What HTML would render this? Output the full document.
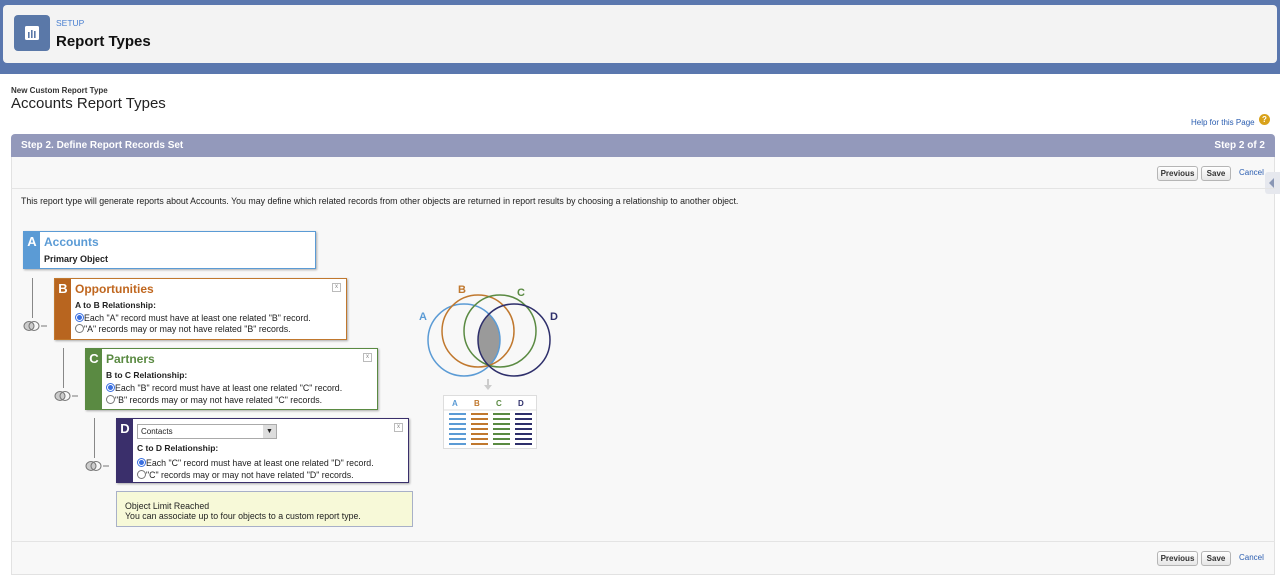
<!DOCTYPE html>
<html><head><meta charset="utf-8"><style>
*{margin:0;padding:0;box-sizing:border-box}
body{width:1280px;height:575px;overflow:hidden;background:#5a77ae;font-family:"Liberation Sans",Arial,sans-serif;position:relative;color:#222}
.a{position:absolute}
.hdr{left:3px;top:5px;width:1274px;height:58px;background:#f3f3f3;border-radius:4px}
.icon{left:14px;top:15px;width:36px;height:36px;background:#5a78a8;border-radius:4px}
.main{left:0;top:74px;width:1280px;height:501px;background:#fff}
.panel{left:11px;top:157px;width:1264px;height:418px;background:#f8f8f8;border:1px solid #e2e2e2;border-top:none}
.step{left:11px;top:134px;width:1264px;height:23px;background:#9399bb;border-radius:4px 4px 0 0;color:#fff;font-weight:bold;font-size:10px;line-height:23px;padding:0 10px}
.btn{height:15px;border:1px solid #b5b5b5;border-radius:3px;background:linear-gradient(#fff,#e6e6e6);font-size:8px;font-weight:bold;color:#333;text-align:center;line-height:13px}
.lnk{color:#2a5db0;font-size:8px}
.box{background:#fff;border:1px solid;box-shadow:1px 1px 2px #aaa}
.let{position:absolute;left:0;top:0;bottom:0;width:16px;color:#fff;font-weight:bold;font-size:13px;text-align:center;line-height:20px}
.ttl{position:absolute;left:20px;top:3px;font-size:12px;font-weight:bold}
.sub{position:absolute;left:20px;font-size:8.5px;font-weight:bold;color:#222}
.opt{position:absolute;left:7px;font-size:8.8px;color:#222;white-space:nowrap}
.rad{display:inline-block;width:9px;height:9px;border-radius:50%;border:1px solid #777;vertical-align:-1px;background:#fff}
.rad.on{border-color:#3a6fe0;background:radial-gradient(#3a6fe0 45%,#fff 55%)}
.x{position:absolute;right:5px;top:4px;width:9px;height:9px;border:1px solid #bbb;font-size:6px;color:#888;text-align:center;line-height:7px}
.vl{background:#888;width:1px}
</style></head><body>
<div class="a hdr"></div>
<div class="a icon"><svg width="36" height="36"><rect x="11" y="11" width="14" height="14" rx="1.5" fill="#fff"/><rect x="14" y="17" width="1.6" height="6" fill="#5a78a8"/><rect x="17" y="15" width="1.6" height="8" fill="#5a78a8"/><rect x="20" y="16" width="1.6" height="7" fill="#5a78a8"/></svg></div>
<div class="a" style="left:56px;top:18px;font-size:8.5px;color:#4a80d1">SETUP</div>
<div class="a" style="left:56px;top:33px;font-size:15px;font-weight:bold;color:#111">Report Types</div>
<div class="a main"></div>
<div class="a" style="left:11px;top:86px;font-size:8px;font-weight:bold;color:#333">New Custom Report Type</div>
<div class="a" style="left:11px;top:95px;font-size:15px;color:#222">Accounts Report Types</div>
<div class="a lnk" style="left:1191px;top:118px">Help for this Page</div>
<div class="a" style="left:1259px;top:114px;width:11px;height:11px;border-radius:50%;background:#d9a21b;color:#fff;font-size:8px;font-weight:bold;text-align:center;line-height:11px">?</div>
<div class="a step">Step 2. Define Report Records Set<span style="float:right">Step 2 of 2</span></div>
<div class="a panel"></div>
<div class="a btn" style="left:1157px;top:166px;width:41px">Previous</div>
<div class="a btn" style="left:1201px;top:166px;width:30px">Save</div>
<div class="a lnk" style="left:1239px;top:168px">Cancel</div>
<div class="a" style="left:1265px;top:172px;width:15px;height:22px;background:#e6e8ee;border-radius:3px 0 0 3px"><div style="margin:6px 0 0 4px;width:0;height:0;border-top:5px solid transparent;border-bottom:5px solid transparent;border-right:5px solid #8a97b5"></div></div>
<div class="a" style="left:11px;top:188px;width:1264px;height:1px;background:#e4e4e4"></div>
<div class="a" style="left:21px;top:196px;font-size:8.8px;color:#222;white-space:nowrap">This report type will generate reports about Accounts. You may define which related records from other objects are returned in report results by choosing a relationship to another object.</div>

<div class="a box" style="left:23px;top:231px;width:293px;height:38px;border-color:#5b9bd5"><div class="let" style="background:#5b9bd5">A</div><div class="ttl" style="color:#5b9bd5">Accounts</div><div class="sub" style="top:22px;font-size:9px">Primary Object</div></div>

<div class="a vl" style="left:32px;top:278px;height:40px"></div>
<div class="a" style="left:23px;top:319px"><svg width="24" height="12"><ellipse cx="6" cy="6" rx="5" ry="4.5" fill="#ccc" stroke="#777"/><ellipse cx="11" cy="6" rx="5" ry="4.5" fill="none" stroke="#777"/><line x1="18" y1="6" x2="24" y2="6" stroke="#777"/></svg></div>
<div class="a box" style="left:54px;top:278px;width:293px;height:62px;border-color:#c0782e"><div class="let" style="background:#b8651f">B</div><div class="ttl" style="color:#c0671f">Opportunities</div><div class="x">x</div><div class="sub" style="top:21px">A to B Relationship:</div><div class="opt" style="left:20px;top:34px"><span class="rad on"></span>Each "A" record must have at least one related "B" record.</div><div class="opt" style="left:20px;top:45px"><span class="rad"></span>"A" records may or may not have related "B" records.</div></div>

<div class="a vl" style="left:63px;top:348px;height:40px"></div>
<div class="a" style="left:54px;top:389px"><svg width="24" height="12"><ellipse cx="6" cy="6" rx="5" ry="4.5" fill="#ccc" stroke="#777"/><ellipse cx="11" cy="6" rx="5" ry="4.5" fill="none" stroke="#777"/><line x1="18" y1="6" x2="24" y2="6" stroke="#777"/></svg></div>
<div class="a box" style="left:85px;top:348px;width:293px;height:62px;border-color:#5a8a42"><div class="let" style="background:#5a8a42">C</div><div class="ttl" style="color:#5a8a42">Partners</div><div class="x">x</div><div class="sub" style="top:21px">B to C Relationship:</div><div class="opt" style="left:20px;top:34px"><span class="rad on"></span>Each "B" record must have at least one related "C" record.</div><div class="opt" style="left:20px;top:46px"><span class="rad"></span>"B" records may or may not have related "C" records.</div></div>

<div class="a vl" style="left:94px;top:418px;height:40px"></div>
<div class="a" style="left:85px;top:459px"><svg width="24" height="12"><ellipse cx="6" cy="6" rx="5" ry="4.5" fill="#ccc" stroke="#777"/><ellipse cx="11" cy="6" rx="5" ry="4.5" fill="none" stroke="#777"/><line x1="18" y1="6" x2="24" y2="6" stroke="#777"/></svg></div>
<div class="a box" style="left:116px;top:418px;width:293px;height:65px;border-color:#3a2f6b"><div class="let" style="background:#3a2f6b">D</div><div class="a" style="left:20px;top:5px;width:140px;height:15px;border:1px solid #aaa;font-size:8px;line-height:13px;padding-left:3px;background:#fff">Contacts<span style="position:absolute;right:0;top:0;width:13px;height:13px;background:#ddd;text-align:center;font-size:7px">&#9660;</span></div><div class="x">x</div><div class="sub" style="top:24px">C to D Relationship:</div><div class="opt" style="left:20px;top:39px"><span class="rad on"></span>Each "C" record must have at least one related "D" record.</div><div class="opt" style="left:20px;top:51px"><span class="rad"></span>"C" records may or may not have related "D" records.</div></div>

<div class="a" style="left:116px;top:491px;width:297px;height:36px;background:#f7f9d8;border:1px solid #a8b0c8;font-size:8.8px;color:#222;padding:9px 0 0 8px;line-height:10px">Object Limit Reached<br>You can associate up to four objects to a custom report type.</div>

<svg class="a" style="left:410px;top:280px" width="160" height="175">
<defs><clipPath id="ca"><circle cx="54" cy="60" r="36"/></clipPath></defs>
<circle cx="104" cy="60" r="36" fill="#9a9a9a" clip-path="url(#ca)"/>
<circle cx="54" cy="60" r="36" fill="none" stroke="#5b9bd5" stroke-width="1.5"/>
<circle cx="68" cy="51" r="36" fill="none" stroke="#c0782e" stroke-width="1.5"/>
<circle cx="90" cy="51" r="36" fill="none" stroke="#5a8a42" stroke-width="1.5"/>
<circle cx="104" cy="60" r="36" fill="none" stroke="#2e2f6b" stroke-width="1.5"/>
<text x="9" y="40" font-size="11" font-weight="bold" fill="#5b9bd5" font-family="Liberation Sans">A</text>
<text x="48" y="13" font-size="11" font-weight="bold" fill="#c0782e" font-family="Liberation Sans">B</text>
<text x="107" y="16" font-size="11" font-weight="bold" fill="#5a8a42" font-family="Liberation Sans">C</text>
<text x="140" y="40" font-size="11" font-weight="bold" fill="#2e2f6b" font-family="Liberation Sans">D</text>
<path d="M77 99v6h-3l4 5 4-5h-3v-6z" fill="#ccc"/>
<rect x="33.5" y="115.5" width="93" height="53" fill="#fff" stroke="#ddd"/>
<line x1="34" y1="130" x2="126" y2="130" stroke="#ddd"/>
<g font-size="8" font-weight="bold" font-family="Liberation Sans"><text x="42" y="126" fill="#5b9bd5">A</text><text x="64" y="126" fill="#c0782e">B</text><text x="86" y="126" fill="#5a8a42">C</text><text x="108" y="126" fill="#2e2f6b">D</text></g>
<g stroke-width="2">
<path d="M39 134h17M39 139h17M39 144h17M39 149h17M39 154h17M39 159h17M39 164h17" stroke="#5b9bd5"/>
<path d="M61 134h17M61 139h17M61 144h17M61 149h17M61 154h17M61 159h17M61 164h17" stroke="#c0782e"/>
<path d="M83 134h17M83 139h17M83 144h17M83 149h17M83 154h17M83 159h17M83 164h17" stroke="#5a8a42"/>
<path d="M105 134h17M105 139h17M105 144h17M105 149h17M105 154h17M105 159h17M105 164h17" stroke="#2e2f6b"/>
</g></svg>

<div class="a" style="left:11px;top:541px;width:1264px;height:1px;background:#e4e4e4"></div>
<div class="a btn" style="left:1157px;top:551px;width:41px">Previous</div>
<div class="a btn" style="left:1201px;top:551px;width:30px">Save</div>
<div class="a lnk" style="left:1239px;top:553px">Cancel</div>
</body></html>
